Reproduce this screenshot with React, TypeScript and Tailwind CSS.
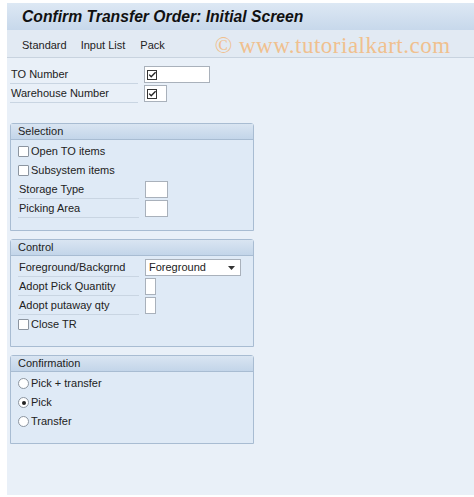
import React from "react";

const font = "font-['Liberation_Sans',Arial,sans-serif]";

function CheckIcon() {
  return (
    <svg width="10" height="10" viewBox="0 0 10 10" className="shrink-0">
      <rect x="0.5" y="0.5" width="9" height="9" fill="none" stroke="#333" strokeWidth="1" />
      <path d="M2.2 4.6 L4.2 6.8 L8.6 2.2" fill="none" stroke="#222" strokeWidth="1.3" />
    </svg>
  );
}

function Input({ w, check }: { w: string; check?: boolean }) {
  return (
    <div className={`${w} h-[17px] bg-white border border-[#a9b1bb] flex items-center pl-[2px]`}>
      {check && <CheckIcon />}
    </div>
  );
}

function FieldRow({ label, children, labelW = "w-[121px]" }: { label: string; children: React.ReactNode; labelW?: string }) {
  return (
    <div className="h-[19px] flex items-center">
      <div className={`${labelW} h-[18px] flex items-center border-b border-[#c9d5e2] pl-[1px] pt-[1px] text-[#222]`}>{label}</div>
      <div className="ml-[6px]">{children}</div>
    </div>
  );
}

function Checkbox({ label }: { label: string }) {
  return (
    <div className="h-[19px] flex items-center">
      <div className="w-[11px] h-[11px] bg-white border border-[#8c95a0] rounded-[1px]" />
      <span className="ml-[2px] text-[#222]">{label}</span>
    </div>
  );
}

function Radio({ label, on }: { label: string; on?: boolean }) {
  return (
    <div className="h-[19px] flex items-center">
      <div className="w-[11px] h-[11px] rounded-full bg-white border border-[#8c95a0] flex items-center justify-center">
        {on && <div className="w-[4px] h-[4px] rounded-full bg-[#222]" />}
      </div>
      <span className="ml-[2px] text-[#222]">{label}</span>
    </div>
  );
}

function Group({ title, children }: { title: string; children: React.ReactNode }) {
  return (
    <div className="w-[244px] border border-[#a8bcd2] rounded-t-[3px] bg-[#dfeaf6]">
      <div className="h-[16px] flex items-center pl-[7px] bg-gradient-to-b from-[#d9e5f2] to-[#c3d5e9] border-b border-[#a8bcd2] text-[#222]">
        {title}
      </div>
      <div className="pt-[2px] pb-[12px] pl-[7px]">{children}</div>
    </div>
  );
}

export default function App() {
  return (
    <div className={`bg-white w-[474px] h-[497px] pt-[3px] pl-[7px] ${font} text-[11px]`}>
      <div className="h-[492px] bg-[#e9f0f8] flex flex-col">
        <div className="h-[27px] bg-gradient-to-b from-[#dde8f4] to-[#c7d8eb] flex items-center pl-[15px]">
          <span className="text-[15.7px] font-bold italic text-[#111]">Confirm Transfer Order: Initial Screen</span>
        </div>
        <div className="h-[28px] bg-[#e2eaf3] border-b border-[#c8d3df] flex items-center pl-[15px] pt-[3px] text-[#222]">
          <span>Standard</span>
          <span className="ml-[14px]">Input List</span>
          <span className="ml-[15px]">Pack</span>
          <span className="ml-[50px] font-['Liberation_Serif',serif] text-[23px] leading-none text-[#f0c08e] tracking-[0.5px]">© www.tutorialkart.com</span>
        </div>
        <div className="pl-[3px] pt-[7px]">
          <FieldRow label="TO Number" labelW="w-[128px]">
            <Input w="w-[66px]" check />
          </FieldRow>
          <FieldRow label="Warehouse Number" labelW="w-[128px]">
            <Input w="w-[23px]" check />
          </FieldRow>
          <div className="mt-[20px] flex flex-col gap-[8px]">
            <Group title="Selection">
              <Checkbox label="Open TO items" />
              <Checkbox label="Subsystem items" />
              <FieldRow label="Storage Type">
                <Input w="w-[23px]" />
              </FieldRow>
              <FieldRow label="Picking Area">
                <Input w="w-[23px]" />
              </FieldRow>
            </Group>
            <Group title="Control">
              <FieldRow label="Foreground/Backgrnd">
                <div className="w-[96px] h-[17px] bg-white border border-[#a9b1bb] flex items-center justify-between pl-[3px] pr-[5px] text-[#222]">
                  <span>Foreground</span>
                  <svg width="7" height="4" viewBox="0 0 7 4">
                    <path d="M0 0 L7 0 L3.5 4 Z" fill="#333" />
                  </svg>
                </div>
              </FieldRow>
              <FieldRow label="Adopt Pick Quantity">
                <Input w="w-[11px]" />
              </FieldRow>
              <FieldRow label="Adopt putaway qty">
                <Input w="w-[11px]" />
              </FieldRow>
              <Checkbox label="Close TR" />
            </Group>
            <Group title="Confirmation">
              <Radio label="Pick + transfer" />
              <Radio label="Pick" on />
              <Radio label="Transfer" />
            </Group>
          </div>
        </div>
      </div>
    </div>
  );
}
